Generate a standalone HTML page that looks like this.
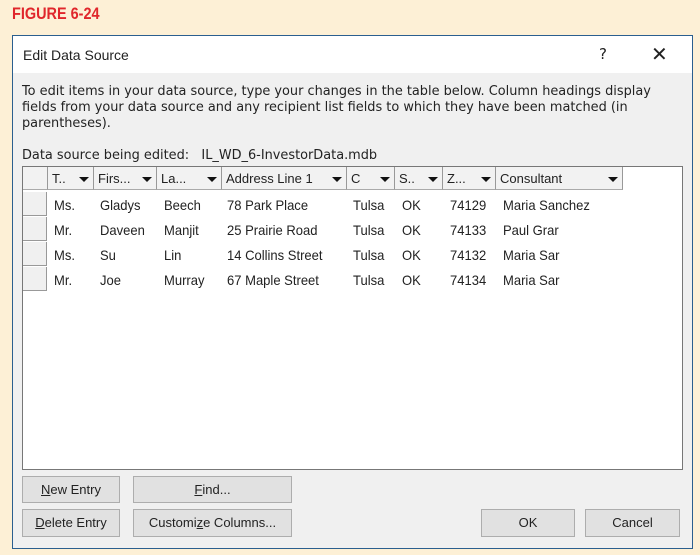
<!DOCTYPE html><html><head><style>
body{margin:0;width:700px;height:555px;background:#fdf0d6;position:relative;overflow:hidden;font-family:"DejaVu Sans","Liberation Sans",sans-serif;}
.fig{position:absolute;left:12px;top:4px;color:#e0262b;font:bold 17px "Liberation Sans Narrow","Liberation Sans",sans-serif;transform:scaleX(.85);transform-origin:left}
.dlg{position:absolute;left:12px;top:35px;width:679px;height:512px;border:1px solid #2b5f8f;background:#f0f0f0;}
.tb{position:absolute;left:0;top:0;width:679px;height:37px;background:#fff}
.t{position:absolute;font-size:13px;color:#222;white-space:nowrap}
.grid{position:absolute;left:9px;top:130px;width:659px;height:302px;border:1px solid #777;background:#fff}
.h{position:absolute;top:0;height:23px;background:#f2f2f2;border-right:1px solid #999;border-bottom:1px solid #aaa;font:13px "Liberation Sans Narrow","Liberation Sans",sans-serif;color:#222;line-height:23px;padding-left:4px;box-sizing:border-box}
.h i{position:absolute;right:4px;top:10px;border-left:5px solid transparent;border-right:5px solid transparent;border-top:5px solid #111}
.rs{position:absolute;left:0;width:24px;height:24px;background:#f0f0f0;border-right:1px solid #999;border-bottom:1px solid #999;box-sizing:border-box}
.c{position:absolute;font-size:14px;color:#222;font-family:"Liberation Sans",sans-serif;white-space:nowrap;transform:scaleX(.93);transform-origin:left}
.b{position:absolute;background:#e1e1e1;border:1px solid #adadad;box-sizing:border-box;text-align:center;font:13px "Liberation Sans",sans-serif;color:#222;line-height:26px;white-space:nowrap}
</style></head><body>
<div class="fig">FIGURE 6-24</div>
<div class="dlg">
<div class="tb"></div>
<div class="t" style="left:10px;top:11px;font-size:14px;font-family:'Liberation Sans',sans-serif">Edit Data Source</div>
<div class="t" style="left:586px;top:9px;font-size:15px">?</div>
<div class="t" style="left:638px;top:6px;font-size:20px;font-weight:300">✕</div>
<div class="t" style="left:9px;top:48px;line-height:16px;font-size:12.9px">To edit items in your data source, type your changes in the table below. Column headings display<br>fields from your data source and any recipient list fields to which they have been matched (in<br>parentheses).</div>
<div class="t" style="left:9px;top:112px;font-size:12.9px">Data source being edited:&nbsp;&nbsp;&nbsp;IL_WD_6-InvestorData.mdb</div>
<div class="grid">
<div class="h" style="left:0;width:25px"></div>
<div class="h" style="left:25px;width:46px">T..<i></i></div>
<div class="h" style="left:71px;width:63px">Firs...<i></i></div>
<div class="h" style="left:134px;width:65px">La...<i></i></div>
<div class="h" style="left:199px;width:125px">Address Line 1<i></i></div>
<div class="h" style="left:324px;width:48px">C<i></i></div>
<div class="h" style="left:372px;width:48px">S..<i></i></div>
<div class="h" style="left:420px;width:53px">Z...<i></i></div>
<div class="h" style="left:473px;width:127px">Consultant<i></i></div>
<div class="rs" style="top:25px"></div><div class="rs" style="top:50px"></div><div class="rs" style="top:75px"></div><div class="rs" style="top:100px"></div>
<div class="c" style="left:31px;top:30px">Ms.</div><div class="c" style="left:77px;top:30px">Gladys</div><div class="c" style="left:141px;top:30px">Beech</div><div class="c" style="left:204px;top:30px">78 Park Place</div><div class="c" style="left:330px;top:30px">Tulsa</div><div class="c" style="left:379px;top:30px">OK</div><div class="c" style="left:427px;top:30px">74129</div><div class="c" style="left:480px;top:30px">Maria Sanchez</div>
<div class="c" style="left:31px;top:55px">Mr.</div><div class="c" style="left:77px;top:55px">Daveen</div><div class="c" style="left:141px;top:55px">Manjit</div><div class="c" style="left:204px;top:55px">25 Prairie Road</div><div class="c" style="left:330px;top:55px">Tulsa</div><div class="c" style="left:379px;top:55px">OK</div><div class="c" style="left:427px;top:55px">74133</div><div class="c" style="left:480px;top:55px">Paul Grar</div>
<div class="c" style="left:31px;top:80px">Ms.</div><div class="c" style="left:77px;top:80px">Su</div><div class="c" style="left:141px;top:80px">Lin</div><div class="c" style="left:204px;top:80px">14 Collins Street</div><div class="c" style="left:330px;top:80px">Tulsa</div><div class="c" style="left:379px;top:80px">OK</div><div class="c" style="left:427px;top:80px">74132</div><div class="c" style="left:480px;top:80px">Maria Sar</div>
<div class="c" style="left:31px;top:105px">Mr.</div><div class="c" style="left:77px;top:105px">Joe</div><div class="c" style="left:141px;top:105px">Murray</div><div class="c" style="left:204px;top:105px">67 Maple Street</div><div class="c" style="left:330px;top:105px">Tulsa</div><div class="c" style="left:379px;top:105px">OK</div><div class="c" style="left:427px;top:105px">74134</div><div class="c" style="left:480px;top:105px">Maria Sar</div>
</div>
<div class="b" style="left:9px;top:440px;width:98px;height:27px"><u>N</u>ew Entry</div>
<div class="b" style="left:120px;top:440px;width:159px;height:27px"><u>F</u>ind...</div>
<div class="b" style="left:9px;top:473px;width:98px;height:28px"><u>D</u>elete Entry</div>
<div class="b" style="left:120px;top:473px;width:159px;height:28px">Customi<u>z</u>e Columns...</div>
<div class="b" style="left:468px;top:473px;width:94px;height:28px">OK</div>
<div class="b" style="left:572px;top:473px;width:95px;height:28px">Cancel</div>
</div>
</body></html>
